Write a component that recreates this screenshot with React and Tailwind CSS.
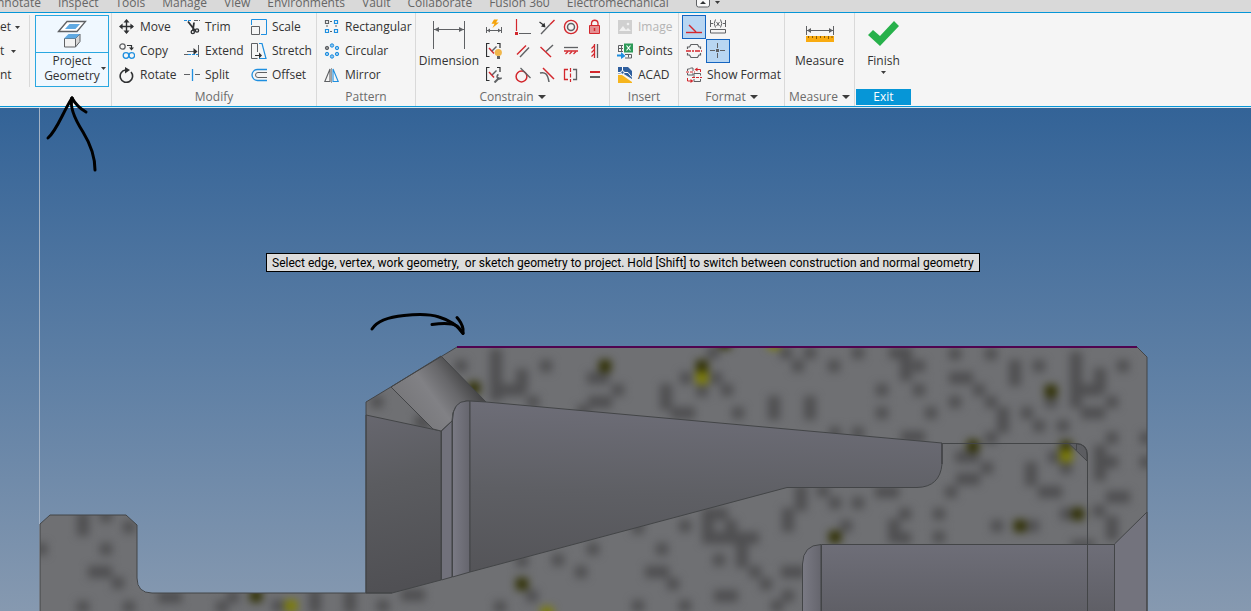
const G = "#5f6164";
const R = "#d3272d";
const B = "#1e8fe0";
const K = "#2f3133";

const tabs = [
  "Inspect",
  "Tools",
  "Manage",
  "View",
  "Environments",
  "Vault",
  "Collaborate",
  "Fusion 360",
  "Electromechanical",
];

const Icon = ({ children, w = 16, h = 16 }) => (
  <svg
    width={w}
    height={h}
    viewBox={`0 0 ${w} ${h}`}
    fill="none"
    className="shrink-0"
    aria-hidden="true"
  >
    {children}
  </svg>
);

const Caret = ({ big }) =>
  big ? (
    <Icon w={8} h={4}>
      <path d="M0 0h8L4 4z" fill="#3c3c3c" />
    </Icon>
  ) : (
    <Icon w={5} h={3}>
      <path d="M0 0h5L2.5 3z" fill="#3c3c3c" />
    </Icon>
  );

// Modify
const MoveIcon = () => (
  <Icon>
    <path d="M7.5 2v12M2 7.5h12" stroke={K} strokeWidth="1.4" />
    <path
      d="M7.5 0l3 3.6h-6zM7.5 15l3-3.6h-6zM0 7.5l3.6-3v6zM15 7.5l-3.6-3v6z"
      fill={K}
    />
  </Icon>
);
const TrimIcon = () => (
  <Icon>
    <path d="M0 1.5h7" stroke={B} strokeDasharray="3 1" />
    <path d="M10 1.5h6" stroke={G} strokeDasharray="4 1" />
    <path d="M4 2.5l7 9M10 3.5L9 11" stroke={K} strokeWidth="1.8" />
    <circle cx="8.8" cy="13" r="1.6" stroke={K} strokeWidth="1.4" />
    <circle cx="13" cy="11.5" r="1.6" stroke={K} strokeWidth="1.4" />
  </Icon>
);
const ScaleIcon = () => (
  <Icon>
    <path d="M.5 6V.5h15v15H10" stroke={B} />
    <path d="M.5 7.5h8v8h-8z" stroke={G} />
  </Icon>
);
const CopyIcon = () => (
  <Icon>
    <circle cx="3.5" cy="3.5" r="2.7" stroke={G} strokeWidth="1.3" />
    <circle cx="7" cy="12.5" r="2.8" stroke={B} strokeWidth="1.3" />
    <circle cx="12.8" cy="12.5" r="2.8" stroke={B} strokeWidth="1.3" />
    <path d="M8 2.5h4.5V5" stroke={K} strokeWidth="1.2" />
    <path d="M10 4.5h5l-2.5 3z" fill={K} />
  </Icon>
);
const ExtendIcon = () => (
  <Icon>
    <path d="M3 8.5h8" stroke={G} />
    <path d="M9.5 5l4 3.5-4 3.5z" fill={K} />
    <path d="M4 11.5h10" stroke={B} strokeDasharray="3 1" />
    <path d="M0 11.5h4" stroke={G} />
    <path d="M14.5 2v12" stroke={G} />
  </Icon>
);
const StretchIcon = () => (
  <Icon>
    <path d="M6.5 9V.5h-6v15h6" stroke={G} />
    <path d="M8 .5h3l4 15H8" stroke={B} strokeWidth="1.2" />
    <path d="M4 12.5h5" stroke={K} />
    <path d="M8 9.5l3 3-3 3z" fill={K} />
  </Icon>
);
const RotateIcon = () => (
  <Icon>
    <path d="M6.5 3A6.2 6.2 0 1 0 12 5" stroke={K} strokeWidth="1.6" />
    <path d="M6 0l5 3-5 3.4z" fill={K} />
  </Icon>
);
const SplitIcon = () => (
  <Icon>
    <path d="M0 7.5h6M11 7.5h5" stroke={G} />
    <path d="M8.5 2v12" stroke={B} strokeWidth="1.3" />
  </Icon>
);
const OffsetIcon = () => (
  <Icon>
    <path d="M16 2.5H6.5a5.5 5.5 0 0 0 0 11H16" stroke={B} strokeWidth="1.3" />
    <path d="M16 5.5H7a2.5 2.5 0 0 0 0 5h9" stroke={G} />
  </Icon>
);

// Pattern
const RectPatternIcon = () => (
  <Icon>
    <path d="M1.5 1.5h3v3h-3z" stroke={G} strokeWidth="1.2" />
    <path
      d="M10.5 1.5h3v3h-3zM1.5 10.5h3v3h-3zM10.5 10.5h3v3h-3z"
      stroke={B}
      strokeWidth="1.2"
    />
    <path d="M6 2.5h3M3 6v3M6 12.5h3M12 6v3" stroke={G} strokeDasharray="2 1" />
  </Icon>
);
const CircPatternIcon = () => (
  <Icon>
    <circle cx="3" cy="5" r="1.7" fill="#8b8d90" stroke={G} />
    {[
      [8, 2.5],
      [13, 5],
      [13, 11],
      [8, 13.5],
      [3, 11],
    ].map(([x, y]) => (
      <circle key={`${x}-${y}`} cx={x} cy={y} r="1.7" fill="#8cc3ee" stroke={B} />
    ))}
  </Icon>
);
const MirrorIcon = () => (
  <Icon>
    <path d="M6 2v12.5H.8z" stroke={G} strokeWidth="1.1" />
    <path d="M9 2v12.5h5.2z" stroke={B} strokeWidth="1.1" />
    <path d="M7.5 1v15" stroke={G} strokeWidth=".6" />
  </Icon>
);

// Constrain
const constrainIcons = [
  {
    name: "Automatic Dimensions",
    art: (
      <>
        <path d="M.5 8v6M15.5 8v6M1 11.5h14" stroke={G} />
        <path d="M1 11.5l3-2v4zM15 11.5l-3-2v4z" fill={G} />
        <path d="M8 .5h4L10 3.5h3L6.5 9l2-4.2h-3z" fill="#f5a30a" />
      </>
    ),
  },
  {
    name: "Coincident",
    art: (
      <>
        <path d="M1.5 0v12" stroke={R} strokeWidth="1.2" />
        <path d="M4 14.5h12" stroke={G} />
        <path d="M0 13h3v3H0z" fill={R} />
      </>
    ),
  },
  {
    name: "Collinear",
    art: (
      <>
        <path d="M2 15L11 5.5" stroke={G} strokeWidth="1.3" />
        <path d="M11 5.5L15.5 1" stroke={R} strokeWidth="1.5" />
        <path d="M.5 3l4 3" stroke={K} strokeWidth="1.2" />
        <path d="M6.5 8.5L2 7.5l3.5-3.7z" fill={K} />
      </>
    ),
  },
  {
    name: "Concentric",
    art: (
      <>
        <circle cx="8" cy="8" r="6.6" stroke={R} strokeWidth="1.4" />
        <circle cx="8" cy="8" r="3.5" stroke={G} strokeWidth="1.5" />
      </>
    ),
  },
  {
    name: "Fix",
    art: (
      <>
        <path d="M4.5 7V4a3.3 3.3 0 0 1 6.5 0v3" stroke={R} strokeWidth="1.3" />
        <path d="M2.5 6.5h10v8h-10z" fill="#e58e91" stroke={R} />
        <path d="M7.5 9v3" stroke={R} strokeWidth="1.5" />
      </>
    ),
  },
  {
    name: "Show Constraints",
    art: (
      <>
        <path d="M3.5 .5h-3v13h3M11 .5h3V5" stroke={K} strokeWidth="1.2" />
        <path d="M3 5l5 5.5" stroke={R} strokeWidth="1.5" />
        <path d="M6 8l4.5-4.5" stroke={G} strokeWidth="1.5" />
        <circle cx="12.3" cy="9.5" r="3.6" fill="#f0b64b" />
        <path d="M11 13h3v3h-3z" fill={G} />
      </>
    ),
  },
  {
    name: "Parallel",
    art: (
      <>
        <path d="M2 11.5l9-9" stroke={R} strokeWidth="1.4" />
        <path d="M5 14l9-9.5" stroke={G} strokeWidth="1.4" />
      </>
    ),
  },
  {
    name: "Perpendicular",
    art: (
      <>
        <path d="M1.5 4L12 14" stroke={R} strokeWidth="1.4" />
        <path d="M7 8.5L14 2" stroke={G} strokeWidth="1.4" />
      </>
    ),
  },
  {
    name: "Horizontal",
    art: (
      <>
        <path d="M1 4.5h14" stroke={G} strokeWidth="1.3" />
        <path d="M1 8h14" stroke={R} strokeWidth="1.5" />
        <path
          d="M5 8.5L2.5 11M9 8.5L6.5 11M13 8.5L10.5 11"
          stroke={R}
          strokeWidth="1.2"
        />
      </>
    ),
  },
  {
    name: "Vertical",
    art: (
      <>
        <path d="M10.5 1v14" stroke={G} strokeWidth="1.3" />
        <path d="M7.5 1v14" stroke={R} strokeWidth="1.3" />
        <path
          d="M7.5 2.5l-3 3M7.5 6.5l-3 3M7.5 10.5l-3 3"
          stroke={R}
          strokeWidth="1.2"
        />
      </>
    ),
  },
  {
    name: "Constraint Settings",
    art: (
      <>
        <path d="M3.5 .5h-3v13h3M11 .5h3V5" stroke={K} strokeWidth="1.2" />
        <path d="M3 5l5 5.5" stroke={R} strokeWidth="1.5" />
        <path d="M6 8l4.5-4.5" stroke={G} strokeWidth="1.5" />
        <path d="M8.5 15.5l5-5" stroke={G} strokeWidth="2" />
        <path d="M12.5 7.5a2.3 2.3 0 1 0 3 3" stroke={G} strokeWidth="1.5" />
      </>
    ),
  },
  {
    name: "Tangent",
    art: (
      <>
        <circle cx="6.5" cy="9.5" r="5.4" stroke={R} strokeWidth="1.5" />
        <path d="M5.5 1l10 10" stroke={G} strokeWidth="1.3" />
      </>
    ),
  },
  {
    name: "Smooth",
    art: (
      <>
        <path d="M1 6q4-1 6 1t3 8" stroke={G} strokeWidth="1.5" />
        <path d="M4 1l11 11" stroke={R} strokeWidth="1.5" />
      </>
    ),
  },
  {
    name: "Symmetric",
    art: (
      <>
        <path d="M5 2.5H1.5v10H5" stroke={R} strokeWidth="1.3" />
        <path d="M10 2.5h3.5v10H10" stroke={G} strokeWidth="1.3" />
        <path d="M7.5 1v14" stroke={R} strokeWidth="1.2" strokeDasharray="4 1.5" />
      </>
    ),
  },
  {
    name: "Equal",
    art: (
      <>
        <path d="M3 5h10" stroke={R} strokeWidth="2" />
        <path d="M3 10h10" stroke={G} strokeWidth="2" />
      </>
    ),
  },
];

// Insert
const ImageIcon = () => (
  <Icon>
    <path d="M1 1h14v14H1z" fill="#d0d0d0" />
    <path d="M2 12l4-5 3 4 2-2 3 3z" fill="#f1f1f1" />
    <circle cx="11" cy="5" r="1.3" fill="#f1f1f1" />
  </Icon>
);
const PointsIcon = () => (
  <Icon>
    <path d="M1.5 9V2.5H6M1.5 5.5H6M4.5 2.5V9M1.5 8.5H6" stroke={G} />
    <path d="M7 .5h9v9H7z" fill="#2c9a58" />
    <path d="M9.5 2.5l4 5M13.5 2.5l-4 5" stroke="#fff" strokeWidth="1.2" />
    <path d="M8 11.5h6.5V15H8M11.5 11.5v3" stroke={G} />
    <path d="M0 11.5h4V9l4.5 4L4 16v-2.5H0z" fill={B} />
  </Icon>
);
const AcadIcon = () => (
  <Icon>
    <path d="M1 0h10l4 4v8L6 6.5H1z" fill="#2f5f9e" />
    <path d="M1 8h4l10 7v1H1z" fill="#f6b51e" />
    <path d="M5.5 0v4M1 5.5h3M7 5.5h4l4 5" stroke="#fff" />
    <circle cx="5.5" cy="5.5" r="1.7" stroke="#fff" fill="#2f5f9e" />
  </Icon>
);

// Format
const formatToggles = [
  {
    name: "Construction",
    on: true,
    art: (
      <>
        <path d="M0 13.5h16" stroke={R} strokeWidth="1.4" />
        <path d="M3 6l7 7" stroke={R} strokeWidth="1.4" />
      </>
    ),
  },
  {
    name: "Driven Dimension",
    on: false,
    art: (
      <>
        <path d="M.5 1v7M15.5 1v7M1 4.5h2M13 4.5h2" stroke={G} />
        <path d="M5.5 .5q-2.6 4 0 8M10.5 .5q2.6 4 0 8" stroke={G} />
        <path d="M6.5 3l3 4M9.5 3l-3 4" stroke={G} />
        <path d="M.5 10.5h15V14H.5z" stroke={G} />
      </>
    ),
  },
  {
    name: "Centerline",
    on: false,
    art: (
      <>
        <path
          d="M1.5 6V4h2L5 1.5h6.5L13 4h1.5v2M1.5 10v2h2L5 14.5h6.5L13 12h1.5v-2"
          stroke={G}
          strokeWidth="1.2"
        />
        <path d="M0 8h16" stroke={R} strokeWidth="1.4" strokeDasharray="5 1 2 1" />
      </>
    ),
  },
  {
    name: "Center Point",
    on: true,
    art: (
      <>
        <path d="M7.5 0v5M7.5 10v5M0 7.5h5M10 7.5h5" stroke={G} />
        <path d="M6 6h3v3H6z" fill={G} />
      </>
    ),
  },
];

const ShowFormatIcon = () => (
  <Icon>
    <path
      d="M1.5 4V2h2l1-1H7v3M1.5 6v2H7V6M8 6.5h6.5v2M8 10V7M8 12v2.5h6.5V12"
      stroke={G}
    />
    <path d="M0 5h9M6 10.5h10" stroke={R} strokeDasharray="3 1" />
    <path d="M14.5 5V2.5H10M1.5 11v3H6" stroke={R} />
    <path d="M11.5 .5v4l-3-2zM4.5 12v4l3-2z" fill={R} />
  </Icon>
);

const modifyTools = [
  { label: "Move", icon: <MoveIcon /> },
  { label: "Trim", icon: <TrimIcon /> },
  { label: "Scale", icon: <ScaleIcon /> },
  { label: "Copy", icon: <CopyIcon /> },
  { label: "Extend", icon: <ExtendIcon /> },
  { label: "Stretch", icon: <StretchIcon /> },
  { label: "Rotate", icon: <RotateIcon /> },
  { label: "Split", icon: <SplitIcon /> },
  { label: "Offset", icon: <OffsetIcon /> },
];

const Tool = ({ icon, label, disabled }) => (
  <button
    disabled={disabled}
    className="flex h-6 items-center gap-[5px] whitespace-nowrap disabled:text-[#b4b4b4]"
  >
    {icon}
    {label}
  </button>
);

const Panel = ({ title, width, menu, active, children }) => (
  <section
    className={`flex shrink-0 flex-col pt-[2px] ${width} ${
      active ? "" : "border-r border-[#d9d9d9]"
    }`}
  >
    <div className="h-[72px]">{children}</div>
    {active ? (
      <h2 className="mx-px mt-[2px] h-4 bg-[#0696d7] text-center leading-4 text-white">
        {title}
      </h2>
    ) : (
      <h2 className="mt-[2px] flex h-4 items-center justify-center gap-1 text-[#6b6b6b]">
        {title}
        {menu && <Caret big />}
      </h2>
    )}
  </section>
);

// section texture: [cx, cy, w, h]
const spots = [
  [377, 402], [461, 366], [496, 375, 12, 52], [513, 390, 26, 12], [522, 379, 12, 20],
  [546, 366], [533, 402], [598, 378, 22, 12], [618, 390], [600, 402, 24, 12],
  [583, 411], [423, 422, 16, 14], [638, 528], [593, 549], [558, 560], [522, 561],
  [581, 572], [657, 572, 24, 12], [532, 596], [500, 607], [638, 606],
  [413, 595, 24, 12], [383, 606], [350, 601, 12, 24], [315, 601, 12, 24],
  [713, 353], [786, 353], [798, 366], [810, 353], [834, 366], [858, 353],
  [895, 353], [906, 364, 12, 34], [919, 366], [919, 390], [882, 390], [882, 413],
  [931, 413], [727, 390], [702, 391], [686, 378], [716, 378], [666, 397, 12, 26],
  [683, 413, 24, 12], [738, 413], [774, 408, 12, 24], [810, 408, 12, 24],
  [835, 433], [858, 433], [913, 437, 24, 12], [685, 526], [708, 526, 12, 36],
  [715, 514, 26, 12], [731, 526], [732, 538, 54, 12], [742, 553, 12, 30],
  [662, 549], [719, 560], [755, 572], [673, 584], [766, 584], [726, 596, 24, 12],
  [788, 596], [777, 606], [685, 606], [793, 572, 24, 12], [801, 498, 12, 26],
  [788, 520, 12, 24], [823, 491], [835, 503], [858, 503], [887, 492, 24, 12],
  [905, 514], [939, 514], [939, 537], [894, 531, 12, 24], [905, 538], [846, 526],
  [951, 492], [955, 354], [991, 354], [1015, 373, 12, 26], [1039, 366],
  [1076, 380, 12, 56], [1123, 366], [1090, 390, 24, 12], [1100, 380, 12, 24],
  [961, 378, 24, 12], [979, 390], [955, 402], [991, 402], [1003, 420, 12, 26],
  [1027, 413], [1039, 426], [1063, 426], [1051, 402], [1112, 402],
  [1093, 413, 24, 12], [991, 438], [1112, 438], [1146, 438], [1146, 462],
  [1100, 463, 12, 36], [1112, 462], [967, 457, 24, 12], [987, 468],
  [968, 479, 24, 12], [1031, 474, 12, 24], [1050, 492, 24, 12], [1054, 457],
  [1066, 468], [1118, 497, 24, 12], [1099, 511], [1112, 528, 12, 24], [1066, 514],
  [1033, 526], [997, 526], [1083, 544, 24, 8], [83, 524, 12, 24], [106, 516],
  [129, 527], [41, 549], [106, 549], [100, 572, 24, 12], [118, 583], [83, 607],
  [129, 607], [170, 597, 24, 12], [233, 597], [222, 607], [278, 606],
];
const oliveSpots = [
  [605, 366], [474, 388], [522, 584], [702, 366], [725, 343], [835, 537],
  [1051, 391], [973, 446], [1066, 447], [1078, 514], [1020, 526], [256, 596],
];
const yellowSpots = [
  [702, 378], [774, 343], [1066, 456], [291, 606], [547, 613],
];

const Spots = ({ list, fill }) => (
  <g fill={fill}>
    {list.map(([x, y, w = 12, h = 12]) => (
      <rect key={`${x}-${y}`} x={x - w / 2} y={y - h / 2} width={w} height={h} />
    ))}
  </g>
);

const BODY =
  "M40 612V524L50 515H126L137 525V578Q137 593 152 593H366V402L457 347H1137L1147 357V612Z";

const Model = () => (
  <svg
    viewBox="0 108 1251 503"
    preserveAspectRatio="xMinYMin slice"
    className="absolute inset-0 h-full w-full"
    role="img"
    aria-label="Section view of the part"
  >
    <defs>
      <clipPath id="body">
        <path d={BODY} />
      </clipPath>
      <filter
        id="soft"
        x="-5%"
        y="-5%"
        width="110%"
        height="110%"
        colorInterpolationFilters="sRGB"
      >
        <feGaussianBlur stdDeviation="4" />
      </filter>
      <linearGradient id="leftFace" x1="0" y1="0" x2="0.1" y2="1">
        <stop offset="0" stopColor="#67676f" />
        <stop offset="0.4" stopColor="#5b5c60" />
        <stop offset="1" stopColor="#505054" />
      </linearGradient>
      <linearGradient
        id="groove"
        gradientUnits="userSpaceOnUse"
        x1="405"
        y1="410"
        x2="460"
        y2="370"
      >
        <stop offset="0" stopColor="#77777a" />
        <stop offset="0.45" stopColor="#818185" />
        <stop offset="0.75" stopColor="#67676a" />
        <stop offset="1" stopColor="#484849" />
      </linearGradient>
      <linearGradient id="wedge" x1="0" y1="0" x2="-0.1" y2="1">
        <stop offset="0" stopColor="#6d6d77" />
        <stop offset="0.5" stopColor="#5e5f64" />
        <stop offset="1" stopColor="#545458" />
      </linearGradient>
      <linearGradient id="strip" x1="0" y1="0" x2="1" y2="0">
        <stop offset="0" stopColor="#7a7a84" />
        <stop offset="1" stopColor="#65656d" />
      </linearGradient>
      <linearGradient id="pocket" x1="0" y1="0" x2="0" y2="1">
        <stop offset="0" stopColor="#6e6e78" />
        <stop offset="1" stopColor="#5f5f66" />
      </linearGradient>
    </defs>

    <path d="M39.5 108V611" stroke="#a3b2c5" />

    <g clipPath="url(#body)">
      <path d={BODY} fill="#6f7073" />
      <g filter="url(#soft)">
        <Spots list={spots} fill="#4f4f51" />
        <Spots list={oliveSpots} fill="#2e2e00" />
        <Spots list={yellowSpots} fill="#7e7e00" />
      </g>
    </g>

    <g stroke="#434547">
      <path d="M366 415L441 431V580L392 593H366Z" fill="url(#leftFace)" />
      <path
        d="M391 387L441 356L486 402L466 401Q452 403 452 421L441 431L433 429Z"
        fill="url(#groove)"
      />
      <path d="M441.5 431L452 421V577L441.5 580Z" fill="#71717b" />
      <path d="M452.5 577V420Q453 401 467 401H470V572Z" fill="url(#strip)" />
      <path
        d="M470 401L486 402L942 443V464Q940 487 917 487.5H787L470 572Z"
        fill="url(#wedge)"
      />
      <path d="M942 443V464" strokeWidth="1.5" />
      <path d="M802.5 612V564Q803 545 821 544.5V612Z" fill="url(#strip)" />
      <path d="M821.5 612V544.5H1114.5V612Z" fill="url(#pocket)" />
      <path d="M1114.5 612V544L1147 512V612Z" fill="#73737d" />
      <path d="M1069 443.5H1076Q1087 444 1087 455V461Z" fill="#5c5d61" />
      <path d="M1076.5 443V450" />
      <path d="M941 443.5H1076Q1087.5 444 1087.5 455V612" fill="none" />
      <path d={BODY} fill="none" />
      <path d="M366 593H392" fill="none" />
    </g>
    <path d="M457 347H1137" stroke="#500450" strokeWidth="2" />

    <g
      fill="none"
      stroke="#000"
      strokeWidth="3"
      strokeLinecap="round"
      strokeLinejoin="round"
    >
      <path d="M372 329C377 321 388 317 404 315.5C417 314 430 314 439 317C449 320 458 326 463 333" />
      <path d="M432 324.5C442 323 452 323 457 326L463 333.5V329Q462 323 457 317.5" />
    </g>
  </svg>
);

const App = () => {
  return (
    <div className="relative flex min-h-screen flex-col overflow-hidden bg-[#f5f5f5] font-['Open_Sans','Noto_Sans',sans-serif] text-xs text-[#333333]">
      {/* Tab bar */}
      <nav className="flex h-3 items-end gap-[17px] overflow-hidden whitespace-nowrap bg-[#d9d9d9] leading-4 text-[#666666]">
        <a href="#annotate" className="-ml-[3px] pb-px">
          nnotate
        </a>
        {tabs.map((tab) => (
          <a key={tab} href={`#${tab}`} className="pb-px">
            {tab}
          </a>
        ))}
        <button
          aria-label="Minimize ribbon"
          className="ml-[10px] flex items-center gap-[5px] pb-1"
        >
          <Icon w={14} h={12}>
            <rect x=".5" y="-2" width="13" height="13" rx="2" fill="#f8f8f8" stroke={G} />
            <path d="M4 8h6L7 5z" fill={K} />
          </Icon>
          <Caret />
        </button>
      </nav>

      {/* Ribbon */}
      <header className="flex h-[95px] border-y border-[#0696d7] bg-[#f5f5f5] leading-4">
        <Panel title="" width="w-[112px]">
          <div className="flex h-full">
            <div className="flex w-[30px] flex-col border-r border-[#d9d9d9]">
              <button className="flex h-6 items-center gap-1">
                et <Caret />
              </button>
              <button className="flex h-6 items-center gap-[7px]">
                t <Caret />
              </button>
              <button className="flex h-6 items-center">nt</button>
            </div>
            <button className="relative ml-[5px] flex w-[74px] flex-col border border-[#29a7e0] bg-[#f0f8ff]">
              <span className="flex h-[37px] w-full items-center justify-center border-b border-[#29a7e0]">
                <Icon w={30} h={28}>
                  <path
                    d="M1.5 11.5L10 1.5h18.5l-8.5 10z"
                    fill="#fff"
                    stroke={G}
                    strokeWidth="1.3"
                  />
                  <path d="M8 9l4.5-5H23l-4.5 5z" fill="#5fa9e2" />
                  <path d="M7.5 18.5h11V27h-11z" fill="#f2f2f2" stroke={G} />
                  <path d="M18.5 18.5L23 14v7.5L18.5 27z" fill="#d6d6d6" stroke={G} />
                  <path d="M7 18.5l4.5-4.5H23l-4.5 4.5z" fill="#5fa9e2" />
                </Icon>
              </span>
              <span className="w-full text-center leading-[15px]">
                Project
                <br />
                Geometry
              </span>
              <span className="absolute bottom-4 right-[2px]">
                <Caret />
              </span>
            </button>
          </div>
        </Panel>

        <Panel title="Modify" width="w-[205px]">
          <div className="grid grid-cols-[65px_67px_auto] pl-[7px]">
            {modifyTools.map((tool) => (
              <Tool key={tool.label} icon={tool.icon} label={tool.label} />
            ))}
          </div>
        </Panel>

        <Panel title="Pattern" width="w-[99px]">
          <div className="pl-[7px]">
            <Tool icon={<RectPatternIcon />} label="Rectangular" />
            <Tool icon={<CircPatternIcon />} label="Circular" />
            <Tool icon={<MirrorIcon />} label="Mirror" />
          </div>
        </Panel>

        <Panel title="Constrain" width="w-[194px]" menu>
          <div className="flex">
            <button className="flex w-[70px] shrink-0 flex-col items-center pr-1 pt-[6px]">
              <Icon w={34} h={32}>
                <path d="M1.5 0v28M32.5 0v28M2 8.5h30" stroke={G} />
                <path d="M2 8.5L7 6v5zM32 8.5L27 6v5z" fill={G} />
              </Icon>
              Dimension
            </button>
            <div className="grid grid-cols-[29px_24px_24px_24px_16px]">
              {constrainIcons.map(({ name, art }) => (
                <button key={name} aria-label={name} className="flex h-6 items-center">
                  <Icon>{art}</Icon>
                </button>
              ))}
            </div>
          </div>
        </Panel>

        <Panel title="Insert" width="w-[69px]">
          <div className="pl-[7px]">
            <Tool icon={<ImageIcon />} label="Image" disabled />
            <Tool icon={<PointsIcon />} label="Points" />
            <Tool icon={<AcadIcon />} label="ACAD" />
          </div>
        </Panel>

        <Panel title="Format" width="w-[106px]" menu>
          <div className="pl-[3px]">
            <div className="grid w-12 grid-cols-2">
              {formatToggles.map(({ name, on, art }) => (
                <button
                  key={name}
                  aria-label={name}
                  aria-pressed={on}
                  className={`flex h-6 items-center justify-center border ${
                    on ? "border-[#1565c0] bg-[#b8d6f2]" : "border-transparent"
                  }`}
                >
                  <Icon>{art}</Icon>
                </button>
              ))}
            </div>
            <div className="pl-1">
              <Tool icon={<ShowFormatIcon />} label="Show Format" />
            </div>
          </div>
        </Panel>

        <Panel title="Measure" width="w-[70px]" menu>
          <button className="flex w-full flex-col items-center pt-[10px]">
            <Icon w={30} h={28}>
              <path d="M1.5 1v9M28.5 1v9M2 5.5h26" stroke={G} />
              <path d="M2 5.5L6 3v5zM28 5.5L24 3v5z" fill={G} />
              <path d="M1 11h28v6H1z" fill="#f9ab10" />
              <path
                d="M3.5 11v2M7.5 11v2M11.5 11v3M15.5 11v2M19.5 11v2M23.5 11v3M27 11v2"
                stroke="#8a5a00"
              />
            </Icon>
            Measure
          </button>
        </Panel>

        <Panel title="Exit" width="w-[57px]" active>
          <button className="flex w-full flex-col items-center pt-[6px]">
            <Icon w={34} h={32}>
              <path d="M1 14l5-5 7 6L27 0l5 5-19 20z" fill="#27b14b" />
            </Icon>
            Finish
            <span className="flex h-[6px] items-center">
              <Caret />
            </span>
          </button>
        </Panel>
      </header>

      {/* Graphics area */}
      <main className="relative flex-1 border-t border-[#dbe6f0] bg-linear-to-b from-[#336397] via-[#5c7ea4] to-[#8699b0]">
        <Model />
        <div
          role="tooltip"
          className="absolute left-[266px] top-[145px] whitespace-pre border border-black bg-[#dcdcdc] px-[5px] pt-px font-[Roboto,sans-serif] leading-4 text-black"
        >
          {
            "Select edge, vertex, work geometry,  or sketch geometry to project. Hold [Shift] to switch between construction and normal geometry"
          }
        </div>
      </main>

      {/* Pen mark over the ribbon edge */}
      <svg
        width="120"
        height="180"
        viewBox="0 0 120 180"
        fill="none"
        stroke="#000"
        strokeWidth="3"
        strokeLinecap="round"
        strokeLinejoin="round"
        className="pointer-events-none absolute left-0 top-0"
        aria-hidden="true"
      >
        <path d="M48 138C57 130 62 114 72 98" />
        <path d="M72 98C69 108 76 121 83 132C91 145 95 158 95 170" />
        <path d="M72 98Q77 107 86 112" />
      </svg>
    </div>
  );
};

export default App;
